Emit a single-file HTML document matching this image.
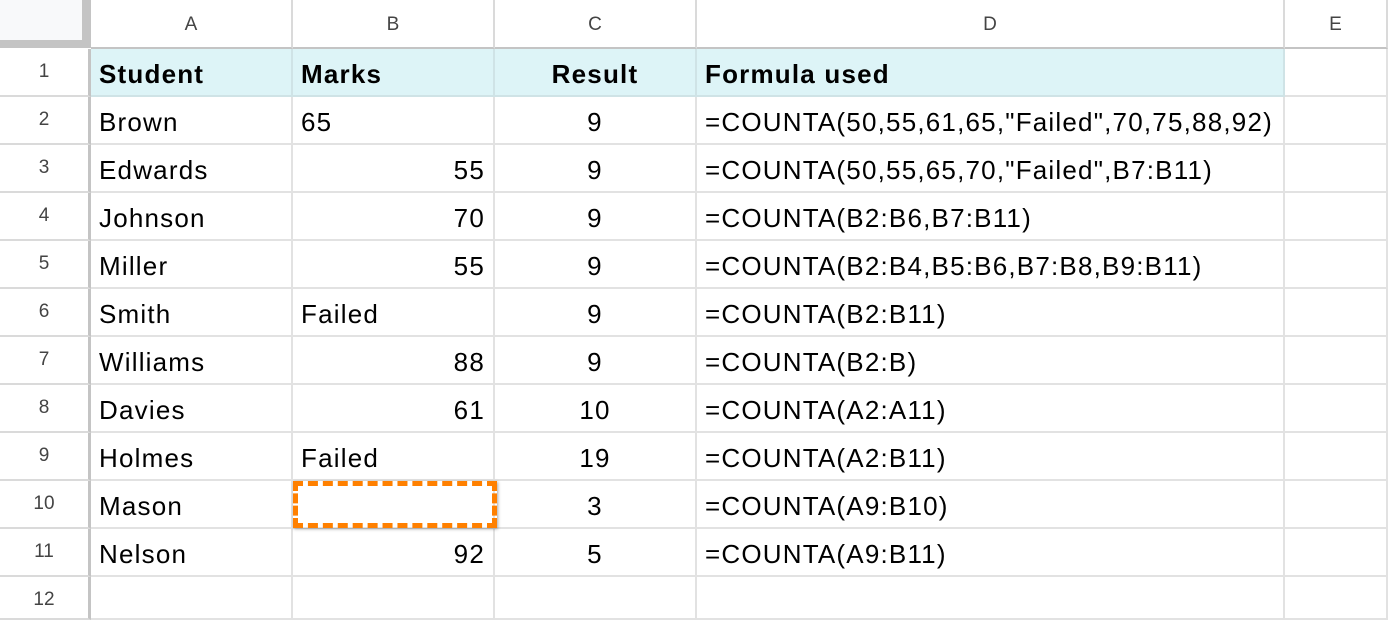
<!DOCTYPE html>
<html><head><style>
body{margin:0;width:1388px;height:620px;overflow:hidden;background:#fff;font-family:"Liberation Sans",sans-serif;position:relative}
.c{position:absolute;box-sizing:border-box;border-right:2px solid #e2e2e2;border-bottom:2px solid #e2e2e2;font-size:26px;letter-spacing:1.2px;color:#000;line-height:50px;padding:0 8px;white-space:nowrap;overflow:hidden}
.h{color:#444;font-size:19px;letter-spacing:0;text-align:center;padding:0}
.r{text-align:right}.m{text-align:center}.b{font-weight:bold}
</style></head><body>
<div style="position:absolute;left:0;top:0;width:82px;height:40px;background:#f8f9fa"></div>
<div style="position:absolute;left:0;top:40px;width:91px;height:8px;background:#c4c4c4"></div>
<div style="position:absolute;left:82px;top:0;width:9px;height:48px;background:#c4c4c4"></div>
<div id="g"></div>
<div style="position:absolute;left:293px;top:481px;width:204px;height:47px;border:5px dashed #ff8000;box-sizing:border-box;box-shadow:1px 1px 3px rgba(0,0,0,.35)"></div>
<script>
const cols=[91,293,495,697,1285,1388];
const letters=["A","B","C","D","E"];
const data=[
["Student","Marks","Result","Formula used"],
["Brown","65","9",'=COUNTA(50,55,61,65,"Failed",70,75,88,92)'],
["Edwards","55","9",'=COUNTA(50,55,65,70,"Failed",B7:B11)'],
["Johnson","70","9","=COUNTA(B2:B6,B7:B11)"],
["Miller","55","9","=COUNTA(B2:B4,B5:B6,B7:B8,B9:B11)"],
["Smith","Failed","9","=COUNTA(B2:B11)"],
["Williams","88","9","=COUNTA(B2:B)"],
["Davies","61","10","=COUNTA(A2:A11)"],
["Holmes","Failed","19","=COUNTA(A2:B11)"],
["Mason","","3","=COUNTA(A9:B10)"],
["Nelson","92","5","=COUNTA(A9:B11)"],
["","","",""]];
let h="";
for(let i=0;i<5;i++){h+=`<div class="c h" style="left:${cols[i]}px;top:0;width:${cols[i+1]-cols[i]}px;height:49px;line-height:50px;border-bottom:2px solid #c4c4c4;border-right-color:#dadada">${letters[i]}</div>`}
for(let r=0;r<12;r++){
 const top=49+r*48,hh=r==11?43:48;
 h+=`<div class="c h" style="left:0;top:${top}px;width:91px;height:${hh}px;border-right:3px solid #c4c4c4;border-bottom-color:#dadada;line-height:46px">${r+1}</div>`;
 for(let c=0;c<5;c++){
  let t=c<4?data[r][c]:"",cls="c";
  if(r==0)cls+=" b";
  if(c==2)cls+=" m";
  if(c==1&&r>1&&/^\d+$/.test(t))cls+=" r";
  const bg=(r==0&&c<4)?';background:#ddf4f7;border-color:#cfe3e6':'';
  h+=`<div class="${cls}" style="left:${cols[c]}px;top:${top}px;width:${cols[c+1]-cols[c]}px;height:${hh}px${bg}">${t.replace(/"/g,'&quot;')}</div>`;
 }
}
document.getElementById("g").innerHTML=h;
</script>
</body></html>
